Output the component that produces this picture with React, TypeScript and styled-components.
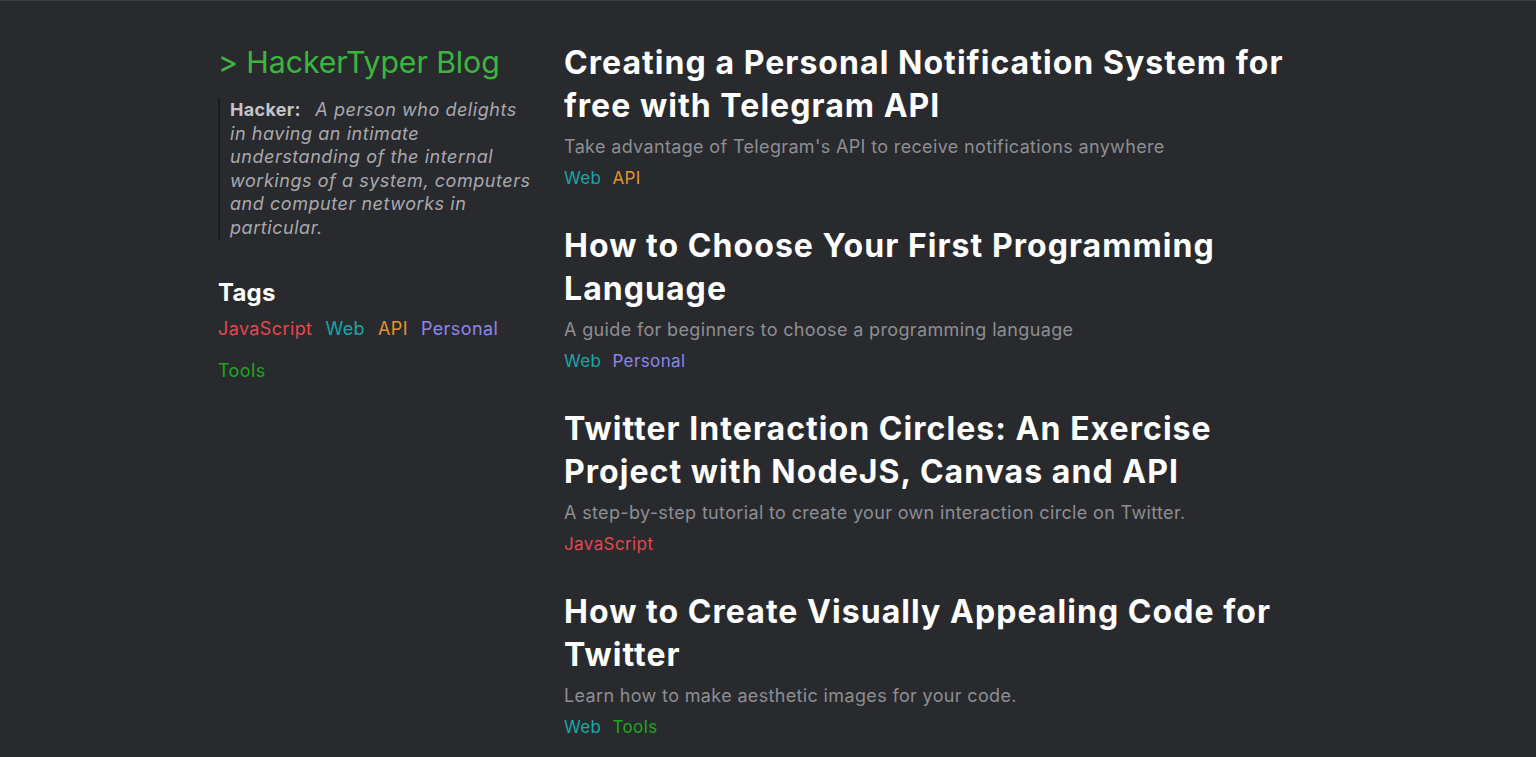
import React from "react";
import styled, { createGlobalStyle } from "styled-components";

const Global = createGlobalStyle`
  html, body { margin: 0; padding: 0; background: #292a2e; }
  body {
    font-family: Inter, "Noto Sans", sans-serif;
    color: #e8e8e8;
    -webkit-font-smoothing: antialiased;
  }
`;

const Page = styled.div`
  min-height: 757px;
  border-top: 1px solid #3d3e42;
  box-sizing: border-box;
  background: #292a2e;
`;

const Container = styled.div`
  max-width: 1100px;
  margin: 0 auto;
  display: grid;
  grid-template-columns: 316px 1fr;
  column-gap: 30px;
  padding-top: 40px;
`;

const Sidebar = styled.aside`
  display: flex;
  flex-direction: column;
`;

const Brand = styled.h1`
  margin: 0;
  font-size: 30.3px;
  font-weight: 400;
  line-height: 42px;
  color: #3cb540;
  letter-spacing: -0.1px;
`;

const Quote = styled.blockquote`
  margin: 15px 0 0 0;
  padding: 0 0 0 10px;
  border-left: 2px solid #1c1d20;
  font-size: 18px;
  line-height: 23.6px;
  font-style: italic;
  letter-spacing: 0.55px;
  color: #a9a9ad;
`;

const QuoteTerm = styled.b`
  font-style: normal;
  font-weight: 700;
  color: #c4c4c8;
  letter-spacing: 0.3px;
  margin-right: 9px;
`;

const TagsTitle = styled.h2`
  margin: 38px 0 0 0;
  font-size: 24px;
  font-weight: 700;
  line-height: 30px;
  letter-spacing: 0.2px;
  color: #ffffff;
`;

const TagCloud = styled.div`
  display: flex;
  flex-wrap: wrap;
  column-gap: 13px;
  row-gap: 18px;
  margin-top: 9px;
`;

const tagColors: Record<string, string> = {
  JavaScript: "#e5484d",
  Web: "#17a7a7",
  API: "#e2922f",
  Personal: "#8d86ea",
  Tools: "#1fa61f",
};

const Tag = styled.span<{ $name: string; $size?: number }>`
  color: ${(p) => tagColors[p.$name] || "#ccc"};
  font-size: ${(p) => p.$size || 18}px;
  line-height: 24px;
  letter-spacing: 0.4px;
`;

const Main = styled.main`
  display: flex;
  flex-direction: column;
  gap: 34px;
`;

const Post = styled.article`
  display: flex;
  flex-direction: column;
`;

const PostTitle = styled.h2`
  margin: 0;
  font-size: 32px;
  line-height: 43px;
  font-weight: 700;
  color: #ffffff;
  letter-spacing: 1.05px;
`;

const PostDesc = styled.p`
  margin: 8px 0 0 0;
  font-size: 18px;
  line-height: 24px;
  letter-spacing: 0.35px;
  color: #8e8e93;
`;

const PostTags = styled.div`
  display: flex;
  gap: 11px;
  margin-top: 7px;
`;

const posts = [
  {
    title: "Creating a Personal Notification System for free with Telegram API",
    desc: "Take advantage of Telegram's API to receive notifications anywhere",
    tags: ["Web", "API"],
  },
  {
    title: "How to Choose Your First Programming Language",
    desc: "A guide for beginners to choose a programming language",
    tags: ["Web", "Personal"],
  },
  {
    title: "Twitter Interaction Circles: An Exercise Project with NodeJS, Canvas and API",
    desc: "A step-by-step tutorial to create your own interaction circle on Twitter.",
    tags: ["JavaScript"],
  },
  {
    title: "How to Create Visually Appealing Code for Twitter",
    desc: "Learn how to make aesthetic images for your code.",
    tags: ["Web", "Tools"],
  },
];

export default function App() {
  return (
    <Page>
      <Global />
      <Container>
        <Sidebar>
          <Brand>&gt; HackerTyper Blog</Brand>
          <Quote>
            <QuoteTerm>Hacker:</QuoteTerm>
            {"\u00a0"}A person who delights in having an intimate understanding of the
            internal workings of a system, computers and computer networks in particular.
          </Quote>
          <TagsTitle>Tags</TagsTitle>
          <TagCloud>
            {["JavaScript", "Web", "API", "Personal", "Tools"].map((t) => (
              <Tag key={t} $name={t}>
                {t}
              </Tag>
            ))}
          </TagCloud>
        </Sidebar>
        <Main>
          {posts.map((p) => (
            <Post key={p.title}>
              <PostTitle>{p.title}</PostTitle>
              <PostDesc>{p.desc}</PostDesc>
              <PostTags>
                {p.tags.map((t) => (
                  <Tag key={t} $name={t} $size={17}>
                    {t}
                  </Tag>
                ))}
              </PostTags>
            </Post>
          ))}
        </Main>
      </Container>
    </Page>
  );
}
